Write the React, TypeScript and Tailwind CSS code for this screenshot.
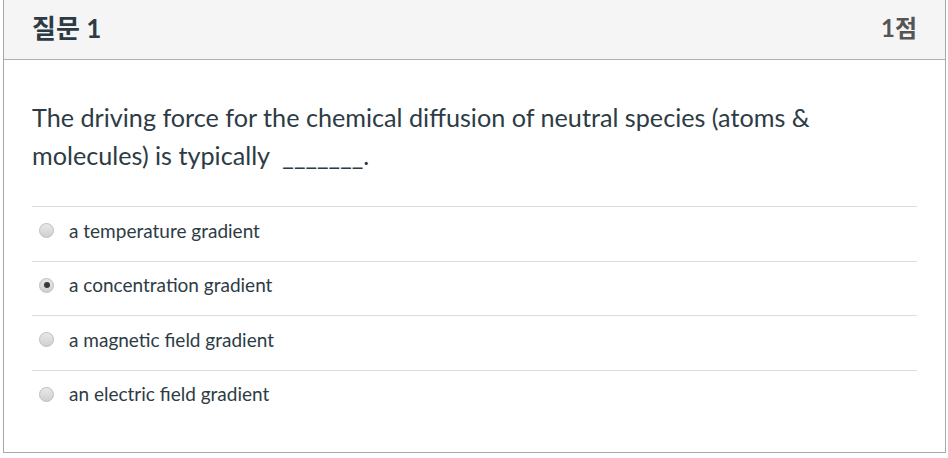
import React from "react";

const answers = [
  { label: "a temperature gradient", checked: false },
  { label: "a concentration gradient", checked: true },
  { label: "a magnetic field gradient", checked: false },
  { label: "an electric field gradient", checked: false },
];

function Radio({ checked }: { checked: boolean }) {
  return (
    <span className="relative flex h-[15px] w-[15px] shrink-0 items-center justify-center rounded-full border border-[#bdbdbd] bg-gradient-to-b from-[#e8e8e8] to-[#d0d0d0]">
      {checked && <span className="h-[6px] w-[6px] rounded-full bg-[#3a3a3a]" />}
    </span>
  );
}

export default function App() {
  return (
    <div className="h-[458px] w-[948px] bg-white">
      <div className="ml-[3px] w-[943px] border-x border-b border-[#a8a8a8] bg-white">
        <div className="flex h-[60px] items-center justify-between border-b border-[#b0b0b0] bg-[#f5f5f5] px-[28px] pb-[3px]">
          <span
            className="text-[26px] font-bold text-[#2d3b45]"
            style={{ fontFamily: "Lato, 'Noto Sans CJK KR', sans-serif" }}
          >
            질문 1
          </span>
          <span
            className="text-[24px] font-bold text-[#555]"
            style={{ fontFamily: "Lato, 'Noto Sans CJK KR', sans-serif" }}
          >
            1점
          </span>
        </div>
        <div className="px-[28px] pb-[28px] pt-[38px]" style={{ fontFamily: "Lato, 'Noto Sans', sans-serif" }}>
          <p className="pr-[60px] text-[25.2px] leading-[38px] text-[#2d3b45]">
            The driving force for the chemical diffusion of neutral species (atoms &amp; molecules) is typically&nbsp;&nbsp;_______.
          </p>
          <div className="mt-[32px]">
            {answers.map((a) => (
              <div
                key={a.label}
                className="flex h-[54.5px] items-center gap-[15px] border-t border-[#dcdcdc] pb-[6px] pl-[7px]"
              >
                <Radio checked={a.checked} />
                <span className="text-[19px] text-[#2d3b45]">{a.label}</span>
              </div>
            ))}
          </div>
        </div>
      </div>
    </div>
  );
}
